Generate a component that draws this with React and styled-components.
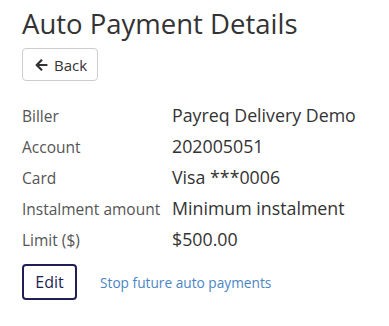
import React from 'react';
import styled, { createGlobalStyle } from 'styled-components';

const GlobalStyle = createGlobalStyle`
  body {
    margin: 0;
    background: #fff;
    font-family: "Open Sans", Lato, sans-serif;
    color: #333;
  }
`

const Page = styled.div`
  padding: 5px 22px 0 22px;
`

const Title = styled.h1`
  margin: 0;
  font-size: 27.5px;
  font-weight: 400;
  color: #333;
  line-height: 38px;
`

const BackButton = styled.button`
  margin-top: 5px;
  display: inline-flex;
  align-items: center;
  gap: 6px;
  height: 33px;
  width: 76px;
  padding: 0 0 0 12px;
  background: #fff;
  border: 1px solid #ccc;
  border-radius: 4px;
  font-family: inherit;
  font-size: 15px;
  color: #333;
`

const Details = styled.div`
  margin-top: 23px;
  display: grid;
  grid-template-columns: 150px 1fr;
  row-gap: 8px;
  align-items: baseline;
`

const Label = styled.div`
  font-size: 15.5px;
  color: #555;
  line-height: 22px;
`

const Value = styled.div`
  font-size: 17.8px;
  color: #333;
  line-height: 22px;
`

const Actions = styled.div`
  margin-top: 13px;
  display: flex;
  align-items: center;
  gap: 23px;
`

const EditButton = styled.button`
  width: 55px;
  height: 36px;
  background: #fff;
  border: 2px solid #1f1f55;
  border-radius: 4px;
  font-family: inherit;
  font-size: 16px;
  color: #1f1f55;
`

const StopLink = styled.a`
  font-size: 13.7px;
  color: #4a86c5;
  text-decoration: none;
`

const ArrowLeft = () => (
  <svg width="13" height="12" viewBox="0 0 448 448">
    <path fill="#333" d="M257 421l-22 22c-9 9-25 9-34 0L7 249c-9-9-9-25 0-34L201 21c9-9 25-9 34 0l22 22c10 10 9 25 0 35L137 192h287c13 0 24 11 24 24v32c0 13-11 24-24 24H137l120 114c10 10 10 25 0 35z" transform="translate(0 -8)" />
  </svg>
)

const rows = [
  ['Biller', 'Payreq Delivery Demo'],
  ['Account', '202005051'],
  ['Card', 'Visa ***0006'],
  ['Instalment amount', 'Minimum instalment'],
  ['Limit ($)', '$500.00'],
]

export default function App() {
  return (
    <Page>
      <GlobalStyle />
      <Title>Auto Payment Details</Title>
      <BackButton><ArrowLeft /> Back</BackButton>
      <Details>
        {rows.map(([k, v]) => (
          <React.Fragment key={k}>
            <Label>{k}</Label>
            <Value>{v}</Value>
          </React.Fragment>
        ))}
      </Details>
      <Actions>
        <EditButton>Edit</EditButton>
        <StopLink href="#">Stop future auto payments</StopLink>
      </Actions>
    </Page>
  )
}
